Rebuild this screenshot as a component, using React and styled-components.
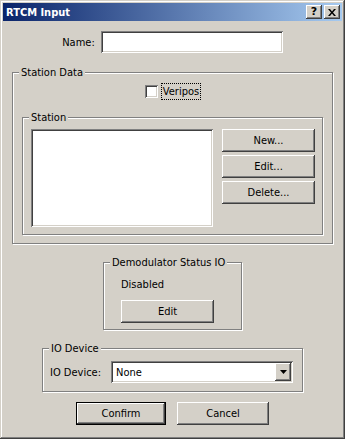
import React from 'react';
import styled, { createGlobalStyle, css } from 'styled-components';

const GlobalStyle = createGlobalStyle`
  html, body {
    margin: 0;
    padding: 0;
    background: #D4D0C8;
  }
  body {
    font-family: "DejaVu Sans Condensed", "DejaVu Sans", Tahoma, sans-serif;
    font-size: 11px;
    color: #000;
  }
`;

const raised = css`
  background: #D4D0C8;
  box-shadow: inset -1px -1px #404040, inset 1px 1px #fff,
    inset -2px -2px #808080, inset 2px 2px #D4D0C8;
`;

const sunken = css`
  background: #fff;
  box-shadow: inset 1px 1px #808080, inset -1px -1px #fff,
    inset 2px 2px #404040, inset -2px -2px #D4D0C8;
`;

const Window = styled.div`
  width: 345px;
  height: 439px;
  box-sizing: border-box;
  padding: 3px;
  background: #D4D0C8;
  box-shadow: inset -1px -1px #404040, inset 1px 1px #D4D0C8,
    inset -2px -2px #808080, inset 2px 2px #fff;
  display: flex;
  flex-direction: column;
`;

const TitleBar = styled.div`
  height: 18px;
  display: flex;
  align-items: center;
  padding: 0 2px 0 3px;
  background: linear-gradient(to right, #0A246A, #A6CAF0);
  color: #fff;
  font-weight: bold;
`;

const Title = styled.div`
  flex: 1;
`;

const TitleButton = styled.div`
  ${raised};
  width: 16px;
  height: 14px;
  box-sizing: border-box;
  margin-left: ${p => p.$gap || 0}px;
  display: flex;
  align-items: center;
  justify-content: center;
  color: #000;
  font-family: "DejaVu Sans", sans-serif;
  font-size: 11px;
  font-weight: bold;
  line-height: 14px;
`;

const Body = styled.div`
  display: flex;
  flex-direction: column;
  padding: 0 9px;
`;

const NameRow = styled.div`
  display: flex;
  justify-content: center;
  align-items: center;
  gap: 6px;
  margin-top: 10px;
`;

const TextBox = styled.div`
  ${sunken};
  width: 182px;
  height: 22px;
  box-sizing: border-box;
`;

const Group = styled.fieldset`
  margin: ${p => p.$mt || 0}px 0 ${p => p.$mb || 0}px;
  padding: 0;
  border: 1px solid #808080;
  box-shadow: inset 1px 1px #fff, 1px 1px #fff;
  min-width: 0;
  align-self: ${p => (p.$w ? 'center' : 'stretch')};
  width: ${p => (p.$w ? `${p.$w}px` : 'auto')};
  box-sizing: border-box;
`;

const Legend = styled.legend`
  margin-left: 6px;
  padding: 0 2px;
  line-height: 13px;
  white-space: nowrap;
  background: #D4D0C8;
`;

const GroupBody = styled.div`
  padding: ${p => p.$pad};
  display: flex;
  flex-direction: column;
  align-items: ${p => p.$align || 'stretch'};
`;

const CheckRow = styled.div`
  display: flex;
  justify-content: center;
  align-items: center;
  gap: 4px;
  margin-top: 5px;
  height: 15px;
`;

const CheckBox = styled.div`
  ${sunken};
  width: 13px;
  height: 13px;
`;

const FocusLabel = styled.span`
  outline: 1px dotted #000;
  outline-offset: 0;
  padding: 0 1px;
  line-height: 15px;
`;

const StationRow = styled.div`
  display: flex;
  gap: 9px;
  margin-top: 5px;
`;

const ListBox = styled.div`
  ${sunken};
  width: 182px;
  height: 98px;
`;

const ButtonStack = styled.div`
  display: flex;
  flex-direction: column;
  gap: 3px;
`;

const Button = styled.div`
  ${raised};
  width: ${p => p.$w || 93}px;
  height: 23px;
  box-sizing: border-box;
  display: flex;
  align-items: center;
  justify-content: center;
  ${p =>
    p.$default &&
    css`
      border: 1px solid #000;
    `}
`;

const StatusText = styled.div`
  line-height: 13px;
  margin: 9px 0 9px;
`;

const DeviceRow = styled.div`
  display: flex;
  align-items: center;
  margin-top: 6px;
`;

const Label = styled.div`
  width: ${p => p.$w}px;
`;

const Combo = styled.div`
  ${sunken};
  width: 182px;
  height: 22px;
  box-sizing: border-box;
  display: flex;
  align-items: center;
  padding: 2px 2px 2px 5px;
`;

const ComboText = styled.div`
  flex: 1;
`;

const DropButton = styled.div`
  ${raised};
  width: 16px;
  height: 18px;
  display: flex;
  align-items: center;
  justify-content: center;
`;

const Footer = styled.div`
  display: flex;
  justify-content: center;
  gap: 11px;
  margin-top: 10px;
`;

export default function App() {
  return (
    <>
      <GlobalStyle />
      <Window>
        <TitleBar>
          <Title>RTCM Input</Title>
          <TitleButton>?</TitleButton>
          <TitleButton $gap={2}>
            <svg width="8" height="7" viewBox="0 0 8 7">
              <path d="M0 0h2l2 2.5L6 0h2L5 3.5 8 7H6L4 4.5 2 7H0l3-3.5z" fill="#000" />
            </svg>
          </TitleButton>
        </TitleBar>
        <Body>
          <NameRow>
            <span>Name:</span>
            <TextBox />
          </NameRow>

          <Group $mt={13}>
            <Legend>Station Data</Legend>
            <GroupBody $pad="0 9px">
              <CheckRow>
                <CheckBox />
                <FocusLabel>Veripos</FocusLabel>
              </CheckRow>
              <Group $mt={12} $mb={8}>
                <Legend>Station</Legend>
                <GroupBody $pad="0 7px 7px 8px">
                  <StationRow>
                    <ListBox />
                    <ButtonStack>
                      <Button>New...</Button>
                      <Button>Edit...</Button>
                      <Button>Delete...</Button>
                    </ButtonStack>
                  </StationRow>
                </GroupBody>
              </Group>
            </GroupBody>
          </Group>

          <Group $mt={12} $w={139}>
            <Legend>Demodulator Status IO</Legend>
            <GroupBody $pad="0 0 6px 17px" $align="flex-start">
              <StatusText>Disabled</StatusText>
              <Button>Edit</Button>
            </GroupBody>
          </Group>

          <Group $mt={12} $w={261}>
            <Legend>IO Device</Legend>
            <GroupBody $pad="0 8px 8px 7px">
              <DeviceRow>
                <Label $w={61}>IO Device:</Label>
                <Combo>
                  <ComboText>None</ComboText>
                  <DropButton>
                    <svg width="7" height="4" viewBox="0 0 7 4">
                      <path d="M0 0h7L3.5 4z" fill="#000" />
                    </svg>
                  </DropButton>
                </Combo>
              </DeviceRow>
            </GroupBody>
          </Group>

          <Footer>
            <Button $w={90} $default>Confirm</Button>
            <Button $w={92}>Cancel</Button>
          </Footer>
        </Body>
      </Window>
    </>
  );
}
